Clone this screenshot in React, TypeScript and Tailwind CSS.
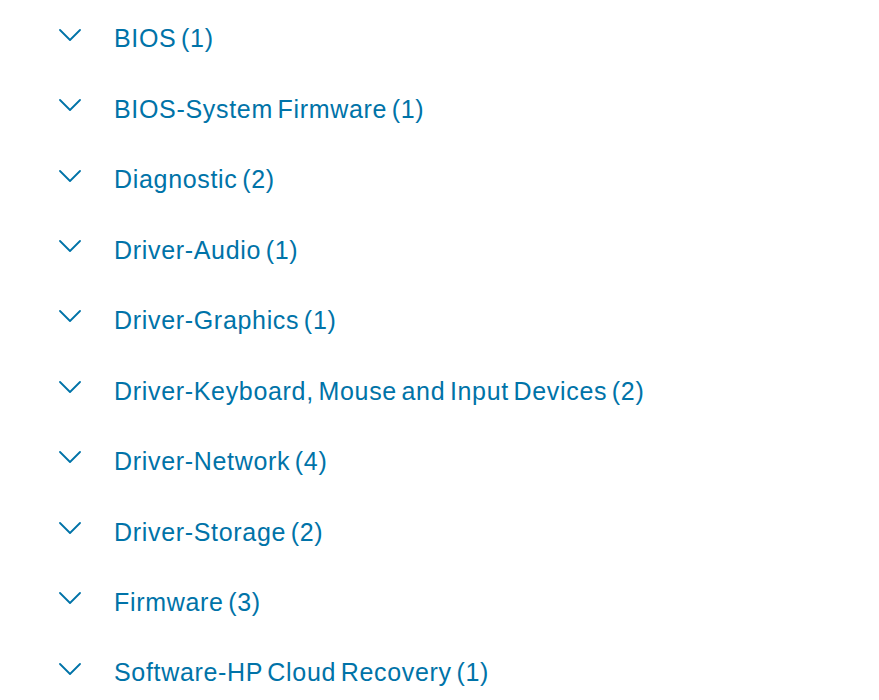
const categories = [
  { name: "BIOS", count: 1 },
  { name: "BIOS-System Firmware", count: 1 },
  { name: "Diagnostic", count: 2 },
  { name: "Driver-Audio", count: 1 },
  { name: "Driver-Graphics", count: 1 },
  { name: "Driver-Keyboard, Mouse and Input Devices", count: 2 },
  { name: "Driver-Network", count: 4 },
  { name: "Driver-Storage", count: 2 },
  { name: "Firmware", count: 3 },
  { name: "Software-HP Cloud Recovery", count: 1 },
]

function Chevron() {
  return (
    <svg width="22" height="12" viewBox="0 0 22 12" fill="none" className="mb-[9px] shrink-0">
      <path d="M1 1l10 10L21 1" stroke="#0073a8" strokeWidth="1.8" strokeLinecap="round" strokeLinejoin="round" />
    </svg>
  )
}

export default function App() {
  return (
    <div className="min-h-screen bg-white pt-[4px] font-['Liberation_Sans',Arial,sans-serif]">
      {categories.map((c) => (
        <div key={c.name} className="flex h-[70.44px] items-center pl-[59px]">
          <Chevron />
          <span className="ml-[33px] text-[25px] text-[#0073a8] tracking-[0.68px] [word-spacing:-3px]">
            {c.name} ({c.count})
          </span>
        </div>
      ))}
    </div>
  )
}
